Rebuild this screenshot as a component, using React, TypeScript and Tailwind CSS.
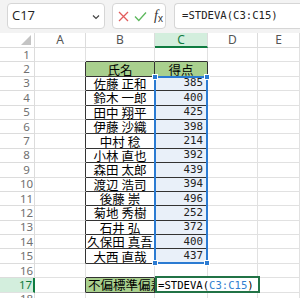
import React from "react";

const data: [string, number][] = [
  ["佐藤 正和", 385],
  ["鈴木 一郎", 400],
  ["田中 翔平", 425],
  ["伊藤 沙織", 398],
  ["中村 稔", 214],
  ["小林 直也", 392],
  ["森田 太郎", 439],
  ["渡辺 浩司", 394],
  ["後藤 崇", 496],
  ["菊地 秀樹", 252],
  ["石井 弘", 372],
  ["久保田 真吾", 400],
  ["大西 直哉", 437],
];

const grid = "border-r border-b border-[#e1e1e1]";
const mono = "font-['DejaVu_Sans_Mono',monospace]";

function RowHeader({ n, active }: { n: number; active?: boolean }) {
  return (
    <div
      className={
        active
          ? "bg-[#d3eedd] border-b border-[#e1e1e1] border-r-2 border-r-[#107c41] text-[#107c41] flex items-center justify-center pl-[18px] text-[11.5px] leading-[12px] font-['Noto_Sans',sans-serif]"
          : "bg-white border-b border-r border-[#dcdcdc] text-[#707070] flex items-center justify-center pl-[19px] text-[11.5px] leading-[12px] font-['Noto_Sans',sans-serif]"
      }
    >
      {n}
    </div>
  );
}

export default function App() {
  const rows: React.ReactNode[] = [];
  for (let r = 1; r <= 18; r++) {
    const inTable = r >= 2 && r <= 15;
    const cells: React.ReactNode[] = [];
    cells.push(<RowHeader key={`h${r}`} n={r} active={r === 17} />);
    cells.push(
      <div
        key={`a${r}`}
        className={
          inTable || r === 17
            ? "border-b border-[#e1e1e1] border-r border-r-[#333]"
            : grid
        }
      />
    );
    if (r === 17) {
      cells.push(
        <div
          key="b17"
          className="bg-[#a9d08e] border-b border-b-[#333] border-r border-r-[#333] overflow-hidden flex items-center pl-[2px] whitespace-nowrap text-[12.5px] text-black leading-[13px]"
        >
          不偏標準偏差
        </div>
      );
      cells.push(
        <div key="c17" className="col-span-2 relative border-b border-[#e1e1e1]">
          <div
            className={`absolute left-0 top-[-2px] w-[105px] h-[17px] border-2 border-[#217346] bg-white flex items-center pl-[1px] text-[10.6px] leading-[12px] text-black whitespace-nowrap ${mono}`}
          >
            =STDEVA(<span className="text-[#2f7fd0]">C3:C15</span>)
          </div>
        </div>
      );
      cells.push(<div key="e17" className={grid} />);
    } else {
      if (r === 2) {
        cells.push(
          <div key="b2" className="bg-[#a9d08e] border-r border-b border-[#333] flex items-center justify-center text-[12.5px] text-black leading-[13px]">
            氏名
          </div>
        );
        cells.push(
          <div key="c2" className="bg-[#a9d08e] border-r border-b border-[#333] flex items-center justify-center text-[12.5px] text-black leading-[13px]">
            得点
          </div>
        );
      } else if (r >= 3 && r <= 15) {
        const [name, score] = data[r - 3];
        cells.push(
          <div key={`b${r}`} className="border-r border-b border-[#333] flex items-center justify-center whitespace-nowrap text-[12.5px] text-black leading-[13px]">
            {name}
          </div>
        );
        cells.push(
          <div key={`c${r}`} className={`bg-[#e9f0f9] border-r border-b border-[#333] flex items-center justify-end pr-[4px] text-[10.8px] leading-[12px] text-[#222] ${mono}`}>
            {score}
          </div>
        );
      } else {
        const bb = r === 1 || r === 16 ? "border-b-[#333]" : "";
        cells.push(<div key={`b${r}`} className={`${grid} ${bb}`} />);
        cells.push(<div key={`c${r}`} className={`${grid} ${bb}`} />);
      }
      cells.push(<div key={`d${r}`} className={grid} />);
      cells.push(<div key={`e${r}`} className={grid} />);
    }
    rows.push(...cells);
  }

  return (
    <div className="w-[300px] h-[298px] overflow-hidden bg-white font-['Noto_Sans_CJK_JP',sans-serif]">
      {/* formula toolbar */}
      <div className="h-[33px] bg-[#f3f3f3] flex items-start pt-[3px] pl-[7px]">
        <div className="w-[98px] h-[26px] bg-white border border-[#d6d6d6] rounded-[4px] flex items-center justify-between pl-[4px] pr-[4px]">
          <span className="text-[13px] text-[#222] font-['Open_Sans',sans-serif]">C17</span>
          <svg width="8" height="6" viewBox="0 0 8 6" className="mt-[1px]">
            <path d="M1 1.5 L4 4.5 L7 1.5" fill="none" stroke="#444" strokeWidth="1.2" />
          </svg>
        </div>
        <div className="ml-[7px] w-[54px] h-[26px] bg-white border border-[#d6d6d6] rounded-[4px] flex items-center pl-[5px] gap-[5px]">
          <svg width="11" height="11" viewBox="0 0 11 11">
            <path d="M1 1 L10 10 M10 1 L1 10" stroke="#e25c5c" strokeWidth="1.3" fill="none" />
          </svg>
          <svg width="13" height="11" viewBox="0 0 13 11">
            <path d="M1 5.5 L4.8 9.5 L12 1.5" stroke="#5cb85c" strokeWidth="1.3" fill="none" />
          </svg>
          <span className="ml-[2px] text-[14px] leading-none text-[#333] italic font-['Liberation_Serif',serif]">
            f<span className="text-[10px] not-italic font-['Liberation_Sans',sans-serif] relative top-[2px]">x</span>
          </span>
        </div>
        <div className={`ml-[8px] flex-1 h-[26px] bg-white border border-r-0 border-[#d6d6d6] rounded-l-[4px] flex items-center pl-[7px] text-[10.6px] text-[#222] whitespace-nowrap ${mono}`}>
          =STDEVA(C3:C15)
        </div>
      </div>

      {/* sheet */}
      <div className="relative grid grid-cols-[35px_51px_69px_53px_50px_1fr] grid-rows-[15px_repeat(18,14.4px)]">
        <div className="bg-white border-r border-b border-[#dcdcdc] flex items-end justify-end pr-[3px] pb-[2px]">
          <svg width="10" height="10" viewBox="0 0 10 10">
            <path d="M10 0 L10 10 L0 10 Z" fill="#c4c4c4" />
          </svg>
        </div>
        {["A", "B"].map((c) => (
          <div key={c} className="bg-white border-r border-b border-[#dcdcdc] flex items-center justify-center text-[12px] leading-[12px] text-[#555] font-['Noto_Sans',sans-serif]">
            {c}
          </div>
        ))}
        <div className="bg-[#d3eedd] border-r border-[#dcdcdc] border-b-2 border-b-[#107c41] flex items-center justify-center text-[12px] leading-[12px] text-[#107c41] font-['Noto_Sans',sans-serif]">
          C
        </div>
        {["D", "E"].map((c) => (
          <div key={c} className="bg-white border-r border-b border-[#dcdcdc] flex items-center justify-center text-[12px] leading-[12px] text-[#555] font-['Noto_Sans',sans-serif]">
            {c}
          </div>
        ))}
        {rows}

        {/* range reference highlight C3:C15 */}
        <div className="absolute left-[154px] top-[42.5px] w-[54px] h-[188px] border-2 border-[#2b7bd2] pointer-events-none">
          <div className="absolute -left-[4px] -top-[4px] w-[6px] h-[6px] bg-[#2b7bd2] border border-white" />
          <div className="absolute -right-[4px] -top-[4px] w-[6px] h-[6px] bg-[#2b7bd2] border border-white" />
          <div className="absolute -left-[4px] -bottom-[4px] w-[6px] h-[6px] bg-[#2b7bd2] border border-white" />
          <div className="absolute -right-[4px] -bottom-[4px] w-[6px] h-[6px] bg-[#2b7bd2] border border-white" />
        </div>
      </div>
    </div>
  );
}
